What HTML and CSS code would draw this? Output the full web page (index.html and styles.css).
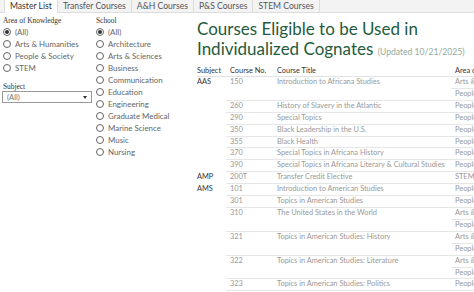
FILE: index.html
```html
<!DOCTYPE html>
<html>
<head>
<meta charset="utf-8">
<link rel="stylesheet" href="styles.css">
</head>
<body>
<div class="tabs">
  <div class="tab active">Master List</div>
  <div class="tab">Transfer Courses</div>
  <div class="tab">A&amp;H Courses</div>
  <div class="tab">P&amp;S Courses</div>
  <div class="tab">STEM Courses</div>
</div>
<div class="main">
  <div class="filters">
    <div class="fcol col1">
      <div class="flabel">Area of Knowledge</div>
      <div class="radio on"><span class="dot"></span>(All)</div>
      <div class="radio"><span class="dot"></span>Arts &amp; Humanities</div>
      <div class="radio"><span class="dot"></span>People &amp; Society</div>
      <div class="radio"><span class="dot"></span>STEM</div>
      <div class="flabel sub">Subject</div>
      <div class="select"><span>(All)</span><span class="arrow"></span></div>
    </div>
    <div class="fcol col2">
      <div class="flabel">School</div>
      <div class="radio on"><span class="dot"></span>(All)</div>
      <div class="radio"><span class="dot"></span>Architecture</div>
      <div class="radio"><span class="dot"></span>Arts &amp; Sciences</div>
      <div class="radio"><span class="dot"></span>Business</div>
      <div class="radio"><span class="dot"></span>Communication</div>
      <div class="radio"><span class="dot"></span>Education</div>
      <div class="radio"><span class="dot"></span>Engineering</div>
      <div class="radio"><span class="dot"></span>Graduate Medical</div>
      <div class="radio"><span class="dot"></span>Marine Science</div>
      <div class="radio"><span class="dot"></span>Music</div>
      <div class="radio"><span class="dot"></span>Nursing</div>
    </div>
  </div>
  <div class="content">
    <h1 class="title">Courses Eligible to be Used in<br>Individualized Cognates <span class="upd">(Updated 10/21/2025)</span></h1>
    <table class="grid">
      <colgroup><col class="c1"><col class="c2"><col class="c3"><col class="c4"></colgroup>
      <thead>
        <tr><th>Subject</th><th>Course No.</th><th>Course Title</th><th>Area of Knowledge</th></tr>
      </thead>
      <tbody>
        <tr><td class="subj" rowspan="8">AAS</td><td rowspan="2">150</td><td rowspan="2">Introduction to Africana Studies</td><td>Arts &amp; Humanities</td></tr>
        <tr><td>People &amp; Society</td></tr>
        <tr><td>260</td><td>History of Slavery in the Atlantic</td><td>People &amp; Society</td></tr>
        <tr><td>290</td><td>Special Topics</td><td>People &amp; Society</td></tr>
        <tr><td>350</td><td>Black Leadership in the U.S.</td><td>People &amp; Society</td></tr>
        <tr><td>355</td><td>Black Health</td><td>People &amp; Society</td></tr>
        <tr><td>370</td><td>Special Topics in Africana History</td><td>People &amp; Society</td></tr>
        <tr><td>390</td><td>Special Topics in Africana Literary &amp; Cultural Studies</td><td>People &amp; Society</td></tr>
        <tr><td class="subj">AMP</td><td>200T</td><td>Transfer Credit Elective</td><td>STEM</td></tr>
        <tr><td class="subj" rowspan="9">AMS</td><td>101</td><td>Introduction to American Studies</td><td>People &amp; Society</td></tr>
        <tr><td>301</td><td>Topics in American Studies</td><td>People &amp; Society</td></tr>
        <tr><td rowspan="2">310</td><td rowspan="2">The United States in the World</td><td>Arts &amp; Humanities</td></tr>
        <tr><td>People &amp; Society</td></tr>
        <tr><td rowspan="2">321</td><td rowspan="2">Topics in American Studies: History</td><td>Arts &amp; Humanities</td></tr>
        <tr><td>People &amp; Society</td></tr>
        <tr><td rowspan="2">322</td><td rowspan="2">Topics in American Studies: Literature</td><td>Arts &amp; Humanities</td></tr>
        <tr><td>People &amp; Society</td></tr>
        <tr><td>323</td><td>Topics in American Studies: Politics</td><td>People &amp; Society</td></tr>
      </tbody>
    </table>
  </div>
</div>
</body>
</html>
```
FILE: styles.css
```css
html, body {
  margin: 0;
  padding: 0;
  background: #fff;
}
body {
  width: 474px;
  height: 292px;
  overflow: hidden;
  font-family: Lato, "Open Sans", sans-serif;
  color: #555;
}
.tabs {
  display: flex;
  height: 12px;
  background: #f3f3f3;
  border-bottom: 1px solid #dcdcdc;
  padding-left: 4px;
}
.tab {
  font-size: 8.6px;
  line-height: 12px;
  padding: 0 5px;
  color: #555;
  border-right: 1px solid #dcdcdc;
}
.tab.active {
  background: #fff;
  color: #333;
  border-left: 1px solid #dcdcdc;
  height: 13px;
}
.main {
  display: flex;
}
.filters {
  display: flex;
  width: 190px;
  flex: none;
}
.fcol {
  display: flex;
  flex-direction: column;
}
.col1 {
  width: 93px;
  padding-left: 2px;
}
.flabel {
  font-family: "Liberation Serif", serif;
  font-size: 7.4px;
  color: #333;
  height: 11px;
  line-height: 11px;
  margin-top: 2px;
  padding-left: 1px;
}
.flabel.sub {
  margin-top: 8px;
  height: 9px;
  line-height: 9px;
}
.radio {
  display: flex;
  align-items: center;
  height: 12px;
  font-size: 7.9px;
  color: #666;
  padding-left: 1px;
}
.dot {
  box-sizing: border-box;
  width: 8px;
  height: 8px;
  border: 1px solid #666;
  border-radius: 50%;
  margin-right: 4px;
  display: inline-flex;
  align-items: center;
  justify-content: center;
  flex: none;
}
.radio.on .dot::after {
  content: "";
  width: 4px;
  height: 4px;
  border-radius: 50%;
  background: #333;
}
.select {
  box-sizing: border-box;
  width: 90px;
  height: 12px;
  border: 1px solid #999;
  display: flex;
  align-items: center;
  justify-content: space-between;
  padding: 0 4px 0 4px;
  font-size: 7.6px;
  color: #777;
}
.arrow {
  width: 0;
  height: 0;
  border-left: 2px solid transparent;
  border-right: 2px solid transparent;
  border-top: 3px solid #333;
}
.content {
  padding-left: 7px;
  flex: 1;
  min-width: 0;
}
.title {
  margin: 6px 0 0 0;
  font-weight: normal;
  font-size: 17px;
  line-height: 20px;
  color: #1f5b3c;
  white-space: nowrap;
}
.upd {
  font-size: 8.6px;
  color: #93aa9e;
}
.grid {
  margin-top: 4px;
  border-collapse: collapse;
  table-layout: fixed;
  width: 300px;
}
.c1 { width: 29px; }
.c2 { width: 47px; }
.c3 { width: 178px; }
.c4 { width: 46px; }
.grid th, .grid td {
  height: 10.9px;
  padding: 0 0 0 4px;
  font-size: 7.4px;
  line-height: 10.9px;
  white-space: nowrap;
  overflow: hidden;
  text-align: left;
  vertical-align: top;
}
.grid th {
  font-weight: normal;
  color: #333;
  border-bottom: 1px solid #e2e2e2;
  height: 10px;
  line-height: 10px;
}
.grid th:first-child, .grid td.subj {
  padding-left: 0;
}
.grid td {
  color: #999;
  border-bottom: 1px solid #e6e6e6;
}
.grid td.subj {
  color: #333;
  border-bottom: none;
}
```
